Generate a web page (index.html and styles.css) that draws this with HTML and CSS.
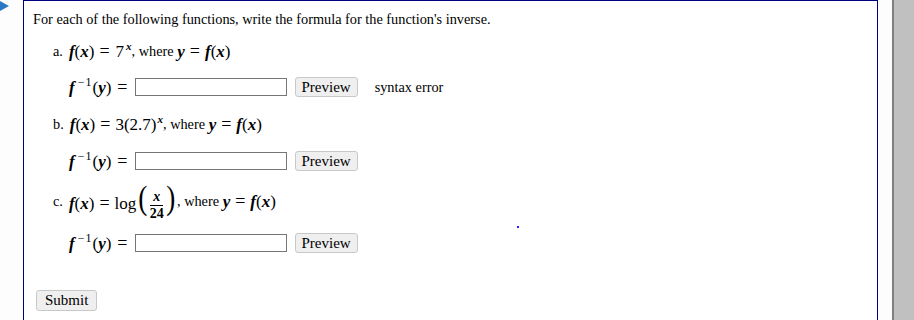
FILE: index.html
```html
<!DOCTYPE html>
<html lang="en">
<head>
    <meta charset="UTF-8">
    <title>Inverse Functions</title>
    <link rel="stylesheet" href="styles.css">
</head>
<body>
    <div class="page">
        <div class="gutter">
            <svg class="marker" width="10" height="12" viewBox="0 0 10 12">
                <polygon points="0,1 9,6 0,11" fill="#2a78c2"/>
            </svg>
        </div>

        <div class="problem">
            <p class="intro">For each of the following functions, write the formula for the function's inverse.</p>

            <div class="part part-a">
                <div class="statement">
                    <span class="tag">a.</span>
                    <span class="math"><i>f</i>(<i>x</i>)<span class="eq">=</span><span class="num-wide">7</span><sup><i>x</i></sup></span>, where <span class="math"><i>y</i><span class="eq">=</span><i>f</i>(<i>x</i>)</span>
                </div>
                <div class="answer">
                    <span class="math"><i>f</i><sup class="inv"><span class="minus">&minus;</span>1</sup>(<i>y</i>)<span class="eq">=</span></span>
                    <input type="text" class="answer-box">
                    <button class="btn">Preview</button>
                    <span class="feedback">syntax error</span>
                </div>
            </div>

            <div class="part part-b">
                <div class="statement">
                    <span class="tag">b.</span>
                    <span class="math"><i>f</i>(<i>x</i>)<span class="eq">=</span>3(2.7)<sup><i>x</i></sup></span>, where <span class="math"><i>y</i><span class="eq">=</span><i>f</i>(<i>x</i>)</span>
                </div>
                <div class="answer">
                    <span class="math"><i>f</i><sup class="inv"><span class="minus">&minus;</span>1</sup>(<i>y</i>)<span class="eq">=</span></span>
                    <input type="text" class="answer-box">
                    <button class="btn">Preview</button>
                </div>
            </div>

            <div class="part part-c">
                <div class="statement">
                    <span class="tag">c.</span>
                    <span class="math"><i>f</i>(<i>x</i>)<span class="eq">=</span>log<span class="paren">(</span><span class="frac"><span class="num"><i>x</i></span><span class="den">24</span></span><span class="paren">)</span></span>, where <span class="math"><i>y</i><span class="eq">=</span><i>f</i>(<i>x</i>)</span>
                </div>
                <div class="answer">
                    <span class="math"><i>f</i><sup class="inv"><span class="minus">&minus;</span>1</sup>(<i>y</i>)<span class="eq">=</span></span>
                    <input type="text" class="answer-box">
                    <button class="btn">Preview</button>
                </div>
            </div>

            <button class="btn submit">Submit</button>
            <span class="cursor-dot"></span>
        </div>

        <div class="side"></div>
    </div>
</body>
</html>
```

FILE: styles.css
```css
* {
    margin: 0;
    padding: 0;
    box-sizing: border-box;
}

body {
    background: #fdfdfd;
    font-family: "Liberation Serif", "Times New Roman", serif;
    font-size: 14.3px;
    color: #000;
    overflow: hidden;
}

.page {
    display: flex;
    height: 320px;
}

.gutter {
    width: 23px;
    flex-shrink: 0;
}

.marker {
    display: block;
}

.problem {
    position: relative;
    flex-shrink: 0;
    width: 855px;
    height: 320px;
    background: #fff;
    border: 1px solid #000080;
    border-bottom: none;
    padding: 9px 0 0 9px;
}

.intro {
    line-height: 18px;
}

.part {
    margin-left: 20px;
}

.statement {
    margin-top: 17px;
    height: 20px;
    display: flex;
    align-items: center;
    white-space: pre;
}

.part-a .statement {
    margin-top: 13px;
}

.tag {
    margin-right: 6px;
}

.math {
    font-family: "Liberation Serif", "Times New Roman", serif;
    font-size: 17px;
    white-space: nowrap;
}

.math i {
    font-weight: 600;
}

.num-wide {
    margin: 0 1px;
}

.eq {
    margin: 0 5px;
    font-size: 18px;
    font-weight: 300;
}

.math sup {
    font-size: 11px;
    vertical-align: 7px;
    line-height: 0;
    margin-left: 1px;
}

.math sup.inv {
    font-size: 12px;
    margin: 0 1px 0 3px;
}

.minus {
    margin-right: 1px;
}

.answer {
    margin: 16px 0 0 16px;
    height: 20px;
    display: flex;
    align-items: center;
    white-space: nowrap;
}

.answer > * {
    flex-shrink: 0;
}

.answer .eq {
    margin: 0 6px;
}

.part-b .answer {
    margin-top: 17px;
}

.answer .math {
    margin-right: 1px;
}

.answer-box {
    width: 152px;
    height: 18px;
    border: 1px solid #767676;
    background: #fff;
    margin-right: 8px;
}

.btn {
    font-family: "Liberation Serif", "Times New Roman", serif;
    font-size: 15px;
    height: 20px;
    padding: 0 6px;
    background: #efefef;
    border: 1px solid #c8c8c8;
    border-radius: 3px;
    color: #000;
}

.feedback {
    margin-left: 17px;
    font-size: 14.3px;
}

.part-c .statement {
    margin-top: 14px;
    height: 32px;
}

.paren {
    font-size: 34px;
    font-weight: 300;
    line-height: 1;
    margin: 0 1px;
    transform: scaleX(0.8);
    display: inline-block;
}

.frac {
    display: inline-flex;
    flex-direction: column;
    align-items: center;
    vertical-align: middle;
    line-height: 14px;
}

.num {
    font-size: 14px;
    border-bottom: 1px solid #000;
    padding: 0 3px 1px;
}

.den {
    font-size: 14px;
    font-weight: 700;
    padding-top: 1px;
}

.submit {
    margin: 37px 0 0 3px;
    height: 21px;
    padding: 0 8px;
}

.cursor-dot {
    position: absolute;
    left: 493px;
    top: 225px;
    width: 2px;
    height: 2px;
    background: #2020ff;
}

.side {
    flex-shrink: 0;
    margin-left: 14px;
    width: 22px;
    background: #c0c0c0;
    border-left: 2px solid #808080;
}
```
